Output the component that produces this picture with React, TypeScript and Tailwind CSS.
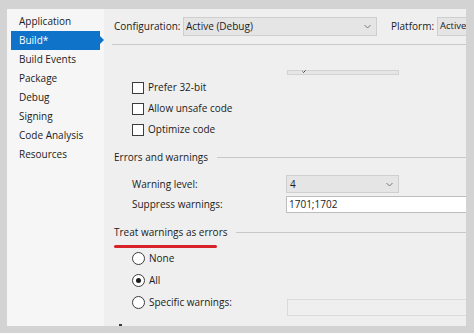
import React from "react";

const font = { fontFamily: '"Open Sans", "Noto Sans", sans-serif' };

function Chevron() {
  return (
    <svg width="7" height="5" viewBox="0 0 7 5" className="shrink-0">
      <polyline points="0.5,1 3.5,4 6.5,1" fill="none" stroke="#6b6b6b" strokeWidth="0.9" />
    </svg>
  );
}

function Checkbox({ label }: { label: string }) {
  return (
    <div className="flex h-[21px] items-center pl-[28px]">
      <div className="h-[12px] w-[12px] border border-[#3c3c3c] bg-white" />
      <span className="ml-[4px]">{label}</span>
    </div>
  );
}

function Radio({ label, checked }: { label: string; checked?: boolean }) {
  return (
    <div className="flex h-[22px] items-center">
      <div className="flex h-[13px] w-[13px] items-center justify-center rounded-full border border-[#3c3c3c] bg-white">
        {checked && <div className="h-[5px] w-[5px] rounded-full bg-[#1b1b1b]" />}
      </div>
      <span className="ml-[4px]">{label}</span>
    </div>
  );
}

function Header({ title }: { title: string }) {
  return (
    <div className="flex h-[18px] items-center pl-[10px]">
      <span className="shrink-0">{title}</span>
      <div className="ml-[9px] h-px flex-1 bg-[#c8c8c8]" />
    </div>
  );
}

const items = ["Application", "Build*", "Build Events", "Package", "Debug", "Signing", "Code Analysis", "Resources"];

export default function App() {
  return (
    <div
      className="flex h-[333px] w-[474px] bg-[#d3d3d3] pb-[7px] pl-[7px] pr-[8px] pt-[9px] text-[10px] text-[#1b1b1b]"
      style={font}
    >
      <div className="flex flex-1 overflow-hidden">
        {/* Sidebar */}
        <div className="w-[97px] shrink-0 bg-[#f6f6f6] pt-[3px]">
          {items.map((it) =>
            it === "Build*" ? (
              <div key={it} className="relative mx-[4px] flex h-[19px] items-center bg-[#0f74c9] pl-[8px] text-white">
                {it}
                <div className="absolute right-[-4px] top-[5px] h-0 w-0 border-y-[4.5px] border-l-[4px] border-y-transparent border-l-[#0f74c9]" />
              </div>
            ) : (
              <div key={it} className="flex h-[19px] items-center pl-[12px]">
                {it}
              </div>
            )
          )}
        </div>

        {/* Main */}
        <div className="relative min-w-0 flex-1 overflow-hidden bg-[#efefef]">
          <div className="mt-[8px] flex h-[19px] items-center pl-[10px]">
            <span className="w-[69px] shrink-0">Configuration:</span>
            <div className="flex h-[19px] w-[194px] shrink-0 items-center justify-between border border-[#cfcfcf] bg-[#e5e5e5] pl-[2px] pr-[5px]">
              <span>Active (Debug)</span>
              <Chevron />
            </div>
            <span className="ml-[14px] w-[46px] shrink-0">Platform:</span>
            <div className="flex h-[19px] flex-1 items-center overflow-hidden whitespace-nowrap border border-r-0 border-[#cfcfcf] bg-[#e5e5e5] pl-[2px] text-[9.5px]">
              <span>Active</span>
            </div>
          </div>
          <div className="ml-[8px] mt-[8px] h-px bg-[#cacaca]" />

          <div className="relative ml-[183px] mt-[25px] h-[5px] w-[112px] border border-[#d2d2d2] bg-[#e6e6e6]">
            <svg width="4" height="3" viewBox="0 0 4 3" className="absolute left-[14px] top-[-1px]">
              <polyline points="0.5,1.5 1.5,2.5 3.5,0.5" fill="none" stroke="#333" strokeWidth="0.9" />
            </svg>
          </div>

          <div className="mt-[2px]">
            <Checkbox label="Prefer 32-bit" />
            <Checkbox label="Allow unsafe code" />
            <Checkbox label="Optimize code" />
          </div>

          <div className="mt-[8px]">
            <Header title="Errors and warnings" />
          </div>

          <div className="mt-[9px] flex h-[18px] items-center pl-[28px]">
            <span className="w-[154px] shrink-0">Warning level:</span>
            <div className="flex h-[18px] w-[113px] items-center justify-between border border-[#cfcfcf] bg-[#e5e5e5] pl-[3px] pr-[5px]">
              <span>4</span>
              <Chevron />
            </div>
          </div>
          <div className="mt-[3px] flex h-[17px] items-center pl-[28px]">
            <span className="w-[154px] shrink-0">Suppress warnings:</span>
            <div className="flex h-[17px] flex-1 items-center border border-r-0 border-[#bdbdbd] bg-white pl-[2px]">
              1701;1702
            </div>
          </div>

          <div className="mt-[10px]">
            <Header title="Treat warnings as errors" />
          </div>
          <div className="ml-[10px] mt-[4px] h-[2.5px] w-[103px] rounded-full bg-[#d9232b]" />

          <div className="pl-[28px]">
            <Radio label="None" />
            <Radio label="All" checked />
            <div className="flex h-[22px] items-start">
              <div className="flex h-[22px] w-[155px] shrink-0 items-center">
                <div className="h-[13px] w-[13px] rounded-full border border-[#3c3c3c] bg-white" />
                <span className="ml-[4px]">Specific warnings:</span>
              </div>
              <div className="mt-[7px] h-[17px] flex-1 border border-r-0 border-[#dadada] bg-[#efefef]" />
            </div>
          </div>
          <div className="ml-[15px] mt-[10px] h-[2px] w-[3px] bg-[#3a3a3a]" />
        </div>
      </div>
    </div>
  );
}
